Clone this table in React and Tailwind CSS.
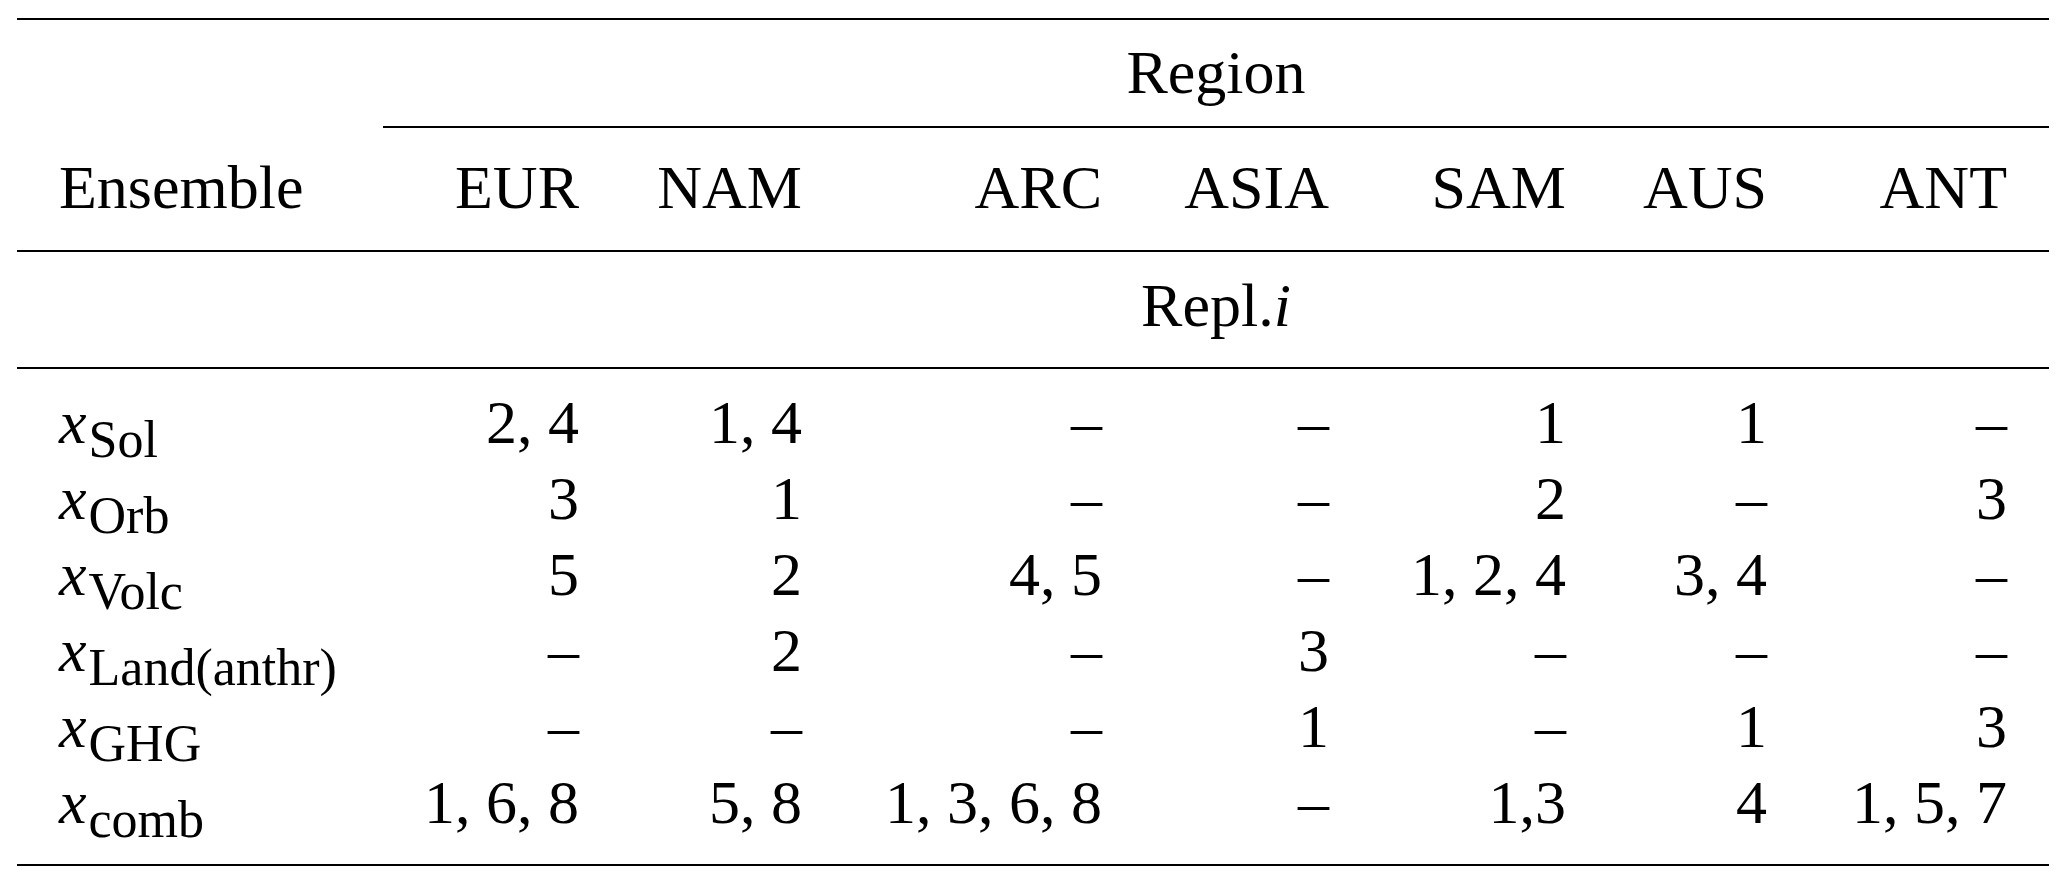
import React from 'react';

const regions = ['EUR', 'NAM', 'ARC', 'ASIA', 'SAM', 'AUS', 'ANT'];

const rows = [
    { sub: 'Sol', values: ['2, 4', '1, 4', '–', '–', '1', '1', '–'] },
    { sub: 'Orb', values: ['3', '1', '–', '–', '2', '–', '3'] },
    { sub: 'Volc', values: ['5', '2', '4, 5', '–', '1, 2, 4', '3, 4', '–'] },
    { sub: 'Land(anthr)', values: ['–', '2', '–', '3', '–', '–', '–'] },
    { sub: 'GHG', values: ['–', '–', '–', '1', '–', '1', '3'] },
    { sub: 'comb', values: ['1, 6, 8', '5, 8', '1, 3, 6, 8', '–', '1,3', '4', '1, 5, 7'] },
];

const Rule = () => <div className="col-span-8 h-[2px] bg-black"></div>;

const App = () => {
    return (
        <div className="w-[2067px] h-[885px] bg-white pt-[18px] pl-[17px] text-black [font-family:'Liberation_Serif','Times_New_Roman',serif] text-[62px]">
            <div className="grid grid-cols-[366px_238px_223px_300px_227px_237px_201px_240px]">
                <Rule />

                {/* Region spanner */}
                <div className="h-[106px]"></div>
                <div className="col-span-7 h-[106px] pt-[21px] leading-[62px] text-center">Region</div>
                <div className="h-[2px]"></div>
                <div className="col-span-7 h-[2px] bg-black"></div>

                {/* Column heads */}
                <div className="h-[122px] pt-[28px] pl-[42px] leading-[62px] text-left">Ensemble</div>
                {regions.map((r) => (
                    <div key={r} className="h-[122px] pt-[28px] pr-[42px] leading-[62px] text-right">{r}</div>
                ))}
                <Rule />

                {/* Repl.i spanner */}
                <div className="h-[115px]"></div>
                <div className="col-span-7 h-[115px] pt-[22px] leading-[62px] text-center">
                    Repl.<span className="italic">i</span>
                </div>
                <Rule />

                <div className="col-span-8 h-[15px]"></div>
                {rows.map((row) => (
                    <React.Fragment key={row.sub}>
                        <div className="h-[76px] pl-[42px] leading-[76px] text-left whitespace-nowrap">
                            <span className="italic">x</span>
                            <span className="relative top-[14px] ml-[2px] text-[52px] leading-none">{row.sub}</span>
                        </div>
                        {row.values.map((v, i) => (
                            <div key={i} className="h-[76px] pr-[42px] leading-[76px] text-right whitespace-nowrap">{v}</div>
                        ))}
                    </React.Fragment>
                ))}
                <div className="col-span-8 h-[24px]"></div>
                <Rule />
            </div>
        </div>
    );
};

export default App;
